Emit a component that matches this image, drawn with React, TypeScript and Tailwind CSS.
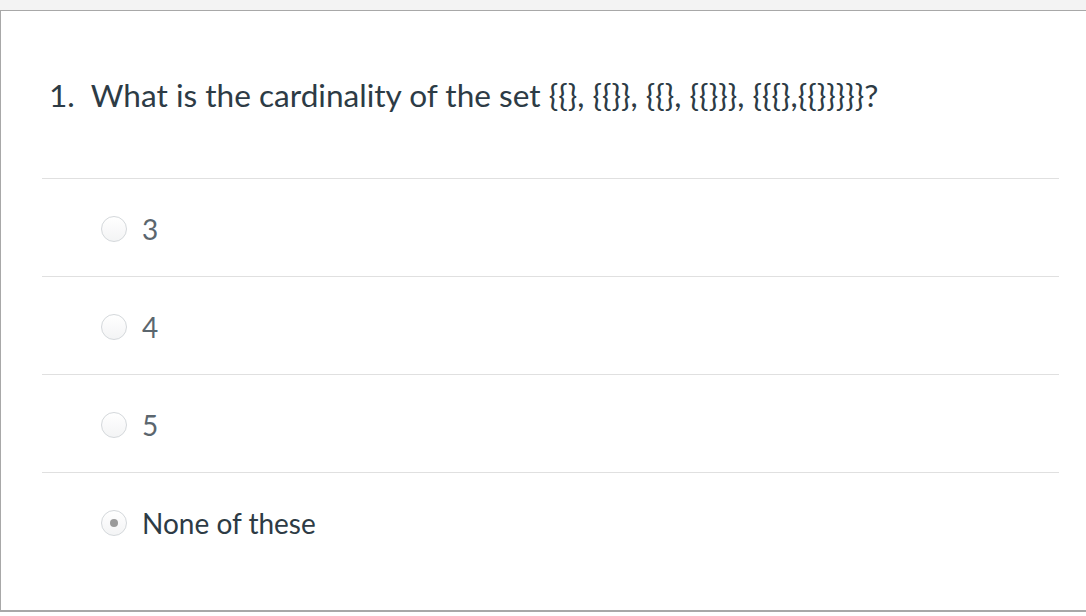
import React from "react";

const options = [
  { label: "3", selected: false },
  { label: "4", selected: false },
  { label: "5", selected: false },
  { label: "None of these", selected: true },
];

function Radio({ selected }: { selected: boolean }) {
  return (
    <span className="flex h-[26px] w-[26px] shrink-0 items-center justify-center rounded-full border border-[#d4d8db] bg-gradient-to-b from-white to-[#f3f4f5]">
      {selected && <span className="h-[8px] w-[8px] rounded-full bg-[#9a9a9a]" />}
    </span>
  );
}

export default function App() {
  return (
    <div className="h-[616px] w-[1086px] bg-white" style={{ fontFamily: "Lato, 'Noto Sans', sans-serif" }}>
      <div className="h-[10px] bg-[#f3f3f3]" />
      <div className="h-[602px] border-t border-b-2 border-l border-[#a8a8a8]">
        <div className="pl-[48px] pt-[64px] text-[31.6px] leading-[40px] text-[#2d3b45]">
          <span className="mr-[16px]">1.</span>
          What is the cardinality of the set {"{{}, {{}}, {{}, {{}}}, {{{},{{}}}}}"}?
        </div>
        <div className="ml-[41px] mr-[27px] mt-[63px]">
          {options.map((o) => (
            <div
              key={o.label}
              className="flex h-[98px] items-center gap-[15px] pl-[59px] pt-[2px] border-t border-[#e0e0e0]"
            >
              <Radio selected={o.selected} />
              <span className={`text-[28px] leading-none ${o.selected ? "text-[#2d3b45]" : "text-[#5b666e]"}`}>
                {o.label}
              </span>
            </div>
          ))}
        </div>
      </div>
    </div>
  );
}
